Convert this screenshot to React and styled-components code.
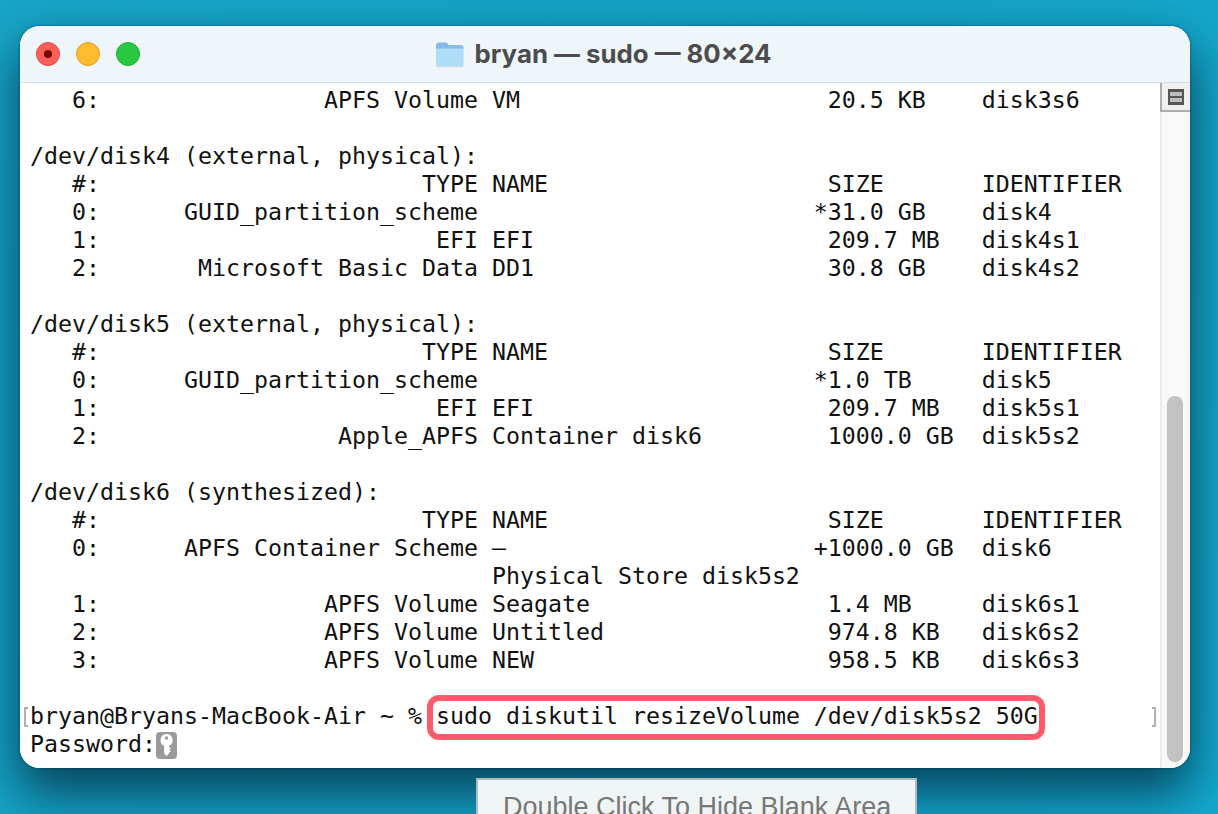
import React from "react";
import styled,{createGlobalStyle} from "styled-components";
const GlobalStyle = createGlobalStyle`
    html,body{margin:0;padding:0;height:814px;overflow:hidden;}
    #root{height:814px;}
`;
const Desktop = styled.div`
    width:1218px;height:814px;box-sizing:border-box;overflow:hidden;padding:26px 28px 0 20px;
    background:linear-gradient(120deg,#17a5c8 0%,#14a3c6 50%,#13aad0 100%);
`;
const Window = styled.div`
    width:1170px;height:742px;border-radius:20px;overflow:hidden;display:flex;flex-direction:column;background:#fff;
    box-shadow:0 24px 50px 2px rgba(0,30,50,.72),0 0 3px rgba(0,30,50,.5);
`;
const TitleBar = styled.div`
    height:56px;flex:none;box-sizing:border-box;padding:0 16px;display:flex;align-items:center;position:relative;background:#eff6f9;
`;
const Lights = styled.div`
    display:flex;column-gap:16px;
`;
const Light = styled.div`
    width:24px;height:24px;box-sizing:border-box;border-radius:50%;display:flex;align-items:center;justify-content:center;
    background:${(p) => p.$color};border:1px solid ${(p) => p.$edge};
`;
const Dot = styled.div`
    width:8px;height:8px;border-radius:50%;background:#7a0505;
`;
const Title = styled.div`
    flex:1;display:flex;align-items:center;justify-content:center;column-gap:10px;margin-right:107px;
    font:700 25.8px/1 "Inter","Liberation Sans",sans-serif;color:#4c4c4c;
`;
const Body = styled.div`
    flex:1;display:flex;min-height:0;border-top:1px solid #d8dcde;
`;
const Terminal = styled.div`
    flex:1;box-sizing:border-box;padding:3px 0 0 10px;background:#fff;
`;
const Row = styled.div`
    height:28px;position:relative;white-space:pre;color:#111;
    font:400 23.26px/28px "DejaVu Sans Mono",monospace;
`;
const Mark = styled.span`
    position:absolute;top:5px;${(p) => p.$right ? "left:1122px;" : "left:-6px;"}width:4px;height:20px;box-sizing:border-box;
    border:2px solid #b0b0b0;${(p) => p.$right ? "border-left:none;" : "border-right:none;"}
`;
const Highlight = styled.span`
    position:relative;
    &::after{
        content:"";position:absolute;left:-9px;right:-7px;top:-7px;bottom:-11px;border:6px solid #ff5a6b;border-radius:12px;
    }
`;
const KeyBadge = styled.span`
    display:inline-flex;vertical-align:top;margin-top:2px;
`;
const Scrollbar = styled.div`
    width:30px;flex:none;box-sizing:border-box;display:flex;flex-direction:column;align-items:center;background:#f9f9f9;border-left:2px solid #ececec;
`;
const SplitButton = styled.div`
    width:30px;height:29px;flex:none;box-sizing:border-box;margin-left:-2px;display:flex;align-items:center;justify-content:center;
    background:#f0f0f0;border-left:2px solid #adadad;border-bottom:2px solid #adadad;
`;
const SplitIcon = styled.div`
    width:16px;height:16px;box-sizing:border-box;padding:3px 2px;display:flex;flex-direction:column;row-gap:2px;background:#555;
`;
const SplitBar = styled.div`
    flex:1;background:#bdbdbd;
`;
const Track = styled.div`
    flex:1;width:100%;box-sizing:border-box;padding:284px 0 6px;display:flex;justify-content:center;
`;
const Thumb = styled.div`
    width:16px;margin-left:-2px;border-radius:8px;background:#c2c2c2;
`;
const HideBar = styled.div`
    width:441px;height:60px;box-sizing:border-box;margin:10px 0 0 456px;padding:12px 0 0 25px;white-space:nowrap;
    background:#eff4f5;border:2px solid #b4b9bb;border-bottom:none;
    font:400 27px/30px "Liberation Sans",sans-serif;color:#777;
`;
const part = (n,type,name,size,id) => `   ${n}:${type.padStart(27)} ${name.padEnd(23)}${size.padEnd(12)}${id}`;
const header = `   #:${"TYPE".padStart(27)} ${"NAME".padEnd(23)} ${"SIZE".padEnd(11)}IDENTIFIER`;
const rows = [
    part(6,"APFS Volume","VM"," 20.5 KB","disk3s6"),
    "",
    "/dev/disk4 (external, physical):",
    header,
    part(0,"GUID_partition_scheme","","*31.0 GB","disk4"),
    part(1,"EFI","EFI"," 209.7 MB","disk4s1"),
    part(2,"Microsoft Basic Data","DD1"," 30.8 GB","disk4s2"),
    "",
    "/dev/disk5 (external, physical):",
    header,
    part(0,"GUID_partition_scheme","","*1.0 TB","disk5"),
    part(1,"EFI","EFI"," 209.7 MB","disk5s1"),
    part(2,"Apple_APFS","Container disk6"," 1000.0 GB","disk5s2"),
    "",
    "/dev/disk6 (synthesized):",
    header,
    part(0,"APFS Container Scheme","–","+1000.0 GB","disk6"),
    `${"".padEnd(33)}Physical Store disk5s2`,
    part(1,"APFS Volume","Seagate"," 1.4 MB","disk6s1"),
    part(2,"APFS Volume","Untitled"," 974.8 KB","disk6s2"),
    part(3,"APFS Volume","NEW"," 958.5 KB","disk6s3"),
    "",
];
const FolderIcon = () => (
    <svg width="29" height="28" viewBox="0 0 29 28">
        <path d="M1 5.500C1 3.600 2 2.600 3.800 2.600h6.400c1.200 0 1.800.4 2.600 1.200l1 1.100h12.200c1.600 0 2.500 1 2.500 2.500v2H1z" fill="#84bce8"/>
        <path d="M1 8.400h27.500v15.400c0 1.500-.9 2.400-2.400 2.400H3.400C1.900 26.200 1 25.300 1 23.800z" fill="#aedcf9"/>
        <path d="M1 25c.4.9 1.200 1.200 2.400 1.200h22.700c1.200 0 2-.3 2.400-1.200v1.200c-.4.7-1.200 1-2.400 1H3.400c-1.200 0-2-.3-2.400-1z" fill="#c9d6de"/>
    </svg>
);
const KeyIcon = () => (
    <svg width="21" height="27" viewBox="0 0 21 27">
        <rect width="21" height="27" rx="4" fill="#9a9a9a"/>
        <path fillRule="evenodd" d="M10.500 2a6.200 6.200 0 0 1 2.600 11.800V15l2 1.400-2 1.300 2 1.300-2 1.400v1.200l-2.600 2.400-2.400-2.400v-7.800A6.200 6.200 0 0 1 10.500 2zm0 2.300a1.700 1.700 0 1 0 0 3.400 1.700 1.700 0 0 0 0-3.400z" fill="#fff"/>
    </svg>
);
const App = () => {
    return (
        <React.Fragment>
            <GlobalStyle/>
            <Desktop>
                <Window>
                    <TitleBar>
                        <Lights>
                            <Light $color="#ff5f57" $edge="#e5483f"><Dot/></Light>
                            <Light $color="#febc2e" $edge="#e0a028"/>
                            <Light $color="#28c840" $edge="#22ad36"/>
                        </Lights>
                        <Title><FolderIcon/>bryan — sudo — 80×24</Title>
                    </TitleBar>
                    <Body>
                        <Terminal>
                            {rows.map((row,i) => <Row key={i}>{row}</Row>)}
                            <Row><Mark/>bryan@Bryans-MacBook-Air ~ % <Highlight>sudo diskutil resizeVolume /dev/disk5s2 50G</Highlight><Mark $right/></Row>
                            <Row>Password:<KeyBadge><KeyIcon/></KeyBadge></Row>
                        </Terminal>
                        <Scrollbar>
                            <SplitButton><SplitIcon><SplitBar/><SplitBar/></SplitIcon></SplitButton>
                            <Track><Thumb/></Track>
                        </Scrollbar>
                    </Body>
                </Window>
                <HideBar>Double Click To Hide Blank Area</HideBar>
            </Desktop>
        </React.Fragment>
    );
}
export default App;
